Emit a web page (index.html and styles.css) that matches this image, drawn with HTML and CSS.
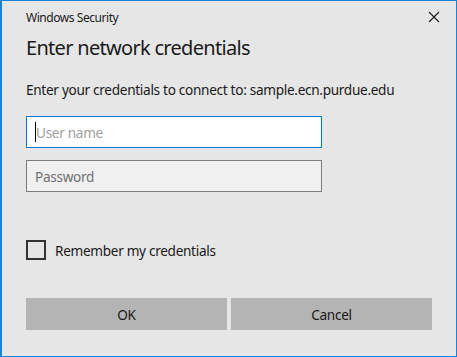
FILE: index.html
```html
<!DOCTYPE html>
<html lang="en">
<head>
  <meta charset="UTF-8">
  <title>Windows Security</title>
  <link rel="stylesheet" href="styles.css">
</head>
<body>
  <div class="dialog">
    <div class="titlebar">
      <span class="app-name">Windows Security</span>
      <svg class="close" width="12" height="12" viewBox="0 0 12 12">
        <path d="M1 1 L11 11 M11 1 L1 11" stroke="#1a1a1a" stroke-width="1.1" fill="none"/>
      </svg>
    </div>
    <h1>Enter network credentials</h1>
    <p class="info">Enter your credentials to connect to: sample.ecn.purdue.edu</p>

    <div class="field field-focus"><span class="caret"></span><span class="placeholder">User name</span></div>
    <div class="field"><span class="placeholder">Password</span></div>

    <label class="remember">
      <span class="checkbox"></span>
      Remember my credentials
    </label>

    <div class="buttons">
      <button class="btn">OK</button>
      <button class="btn">Cancel</button>
    </div>
  </div>
</body>
</html>
```

FILE: styles.css
```css
html, body {
  margin: 0;
  padding: 0;
}
body {
  font-family: 'Noto Sans', 'Open Sans', sans-serif;
  color: #1a1a1a;
  background: #ffffff;
}
.dialog {
  width: 457px;
  height: 357px;
  box-sizing: border-box;
  border: 1px solid #1883d7;
  border-left-width: 2px;
  background: #e6e6e6;
  padding: 0 24px 0 24px;
  position: relative;
}
.titlebar {
  display: flex;
  justify-content: space-between;
  align-items: center;
  height: 32px;
}
.app-name {
  font-size: 12px;
  letter-spacing: -0.45px;
}
.close {
  margin-right: -8px;
}
h1 {
  font-size: 20px;
  font-weight: normal;
  margin: 0;
  line-height: 30px;
  letter-spacing: -0.7px;
}
.info {
  font-size: 13.6px;
  margin: 17px 0 0 0;
  line-height: 20px;
  letter-spacing: -0.3px;
}
.field {
  width: 296px;
  height: 32px;
  box-sizing: border-box;
  border: 1px solid #7a7a7a;
  background: #f0f0f0;
  display: flex;
  align-items: center;
  padding-left: 8px;
  margin-top: 12px;
}
.field-focus {
  border-color: #0078d7;
  background: #ffffff;
  margin-top: 16px;
}
.caret {
  width: 1px;
  height: 20px;
  background: #000;
}
.placeholder {
  font-size: 13.6px;
  color: #707070;
  letter-spacing: -0.3px;
}
.field-focus .placeholder {
  color: #a0a0a0;
}
.remember {
  display: flex;
  align-items: center;
  font-size: 13.6px;
  letter-spacing: -0.3px;
  margin-top: 48px;
}
.checkbox {
  width: 20px;
  height: 20px;
  box-sizing: border-box;
  border: 2px solid #333333;
  margin-right: 9px;
}
.buttons {
  display: flex;
  gap: 4px;
  margin-top: 38px;
}
.btn {
  width: 201px;
  height: 32px;
  border: none;
  background: #b4b4b4;
  font-family: inherit;
  font-size: 13.6px;
  letter-spacing: -0.3px;
  color: #1a1a1a;
  padding: 0;
}
```
